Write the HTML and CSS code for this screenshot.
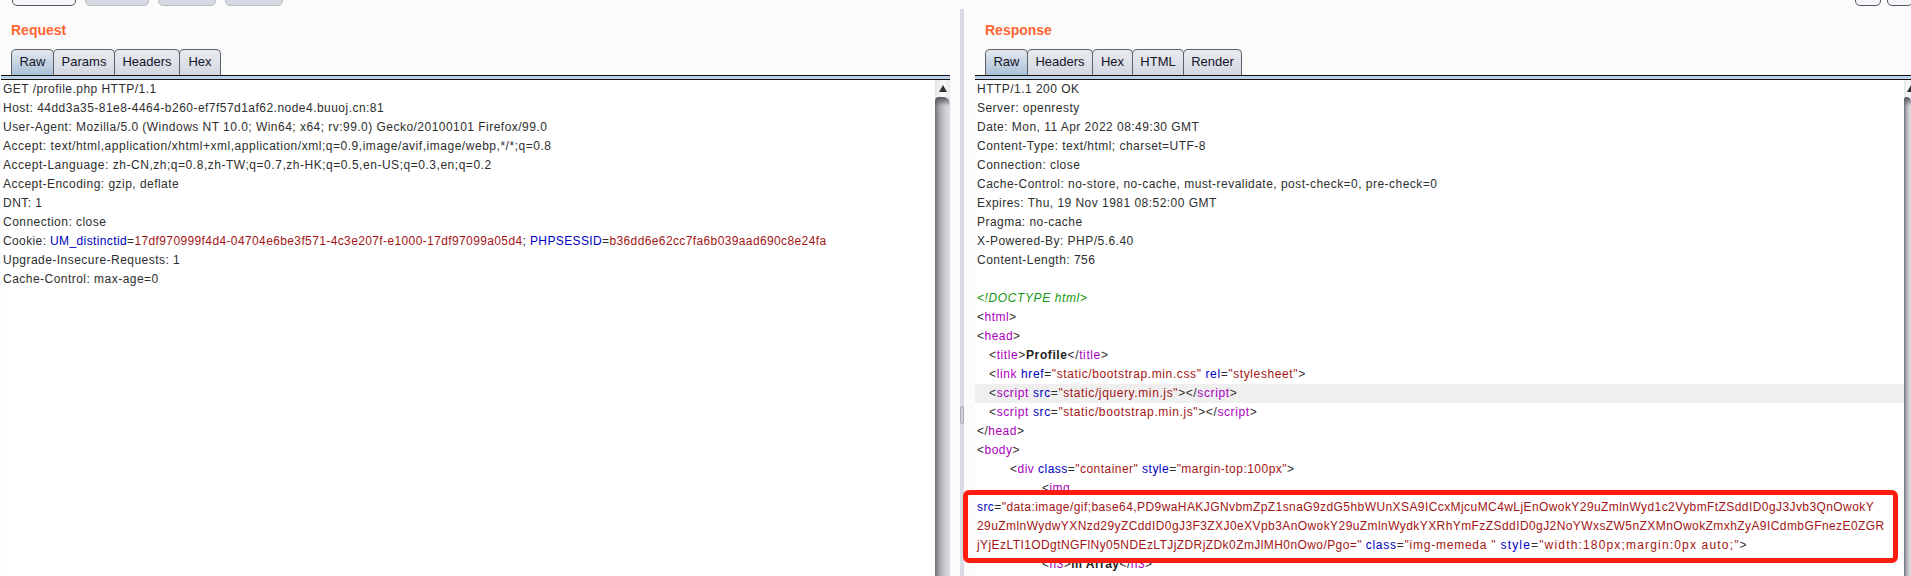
FILE: index.html
```html
<!DOCTYPE html>
<html lang="en">
<head>
<meta charset="utf-8">
<title>Repeater</title>
<link rel="stylesheet" href="styles.css">
</head>
<body>
<div class="app">
  <header class="toolbar">
    <div class="tools-left">
      <span class="tool tool-active wa"></span>
      <span class="tool wa"></span>
      <span class="tool wb"></span>
      <span class="tool wb"></span>
    </div>
    <div class="tools-right">
      <span class="tool tool-active wc"></span>
      <span class="tool tool-active wc"></span>
    </div>
  </header>
  <main class="panes">
    <section class="pane pane-left">
      <h2 class="pane-title">Request</h2>
      <nav class="tabs">
        <span class="tab tab-active t-raw">Raw</span>
        <span class="tab t-params">Params</span>
        <span class="tab t-headers">Headers</span>
        <span class="tab t-hex">Hex</span>
      </nav>
      <div class="tabline"></div>
      <div class="viewer">
        <div class="code">
          <div class="ln">GET /profile.php HTTP/1.1</div>
          <div class="ln">Host: 44dd3a35-81e8-4464-b260-ef7f57d1af62.node4.buuoj.cn:81</div>
          <div class="ln">User-Agent: Mozilla/5.0 (Windows NT 10.0; Win64; x64; rv:99.0) Gecko/20100101 Firefox/99.0</div>
          <div class="ln wide">Accept: text/html,application/xhtml+xml,application/xml;q=0.9,image/avif,image/webp,*/*;q=0.8</div>
          <div class="ln wide">Accept-Language: zh-CN,zh;q=0.8,zh-TW;q=0.7,zh-HK;q=0.5,en-US;q=0.3,en;q=0.2</div>
          <div class="ln">Accept-Encoding: gzip, deflate</div>
          <div class="ln">DNT: 1</div>
          <div class="ln">Connection: close</div>
          <div class="ln cookie">Cookie: <span class="k">UM_distinctid</span>=<span class="v">17df970999f4d4-04704e6be3f571-4c3e207f-e1000-17df97099a05d4</span>; <span class="k">PHPSESSID</span>=<span class="v">b36dd6e62cc7fa6b039aad690c8e24fa</span></div>
          <div class="ln">Upgrade-Insecure-Requests: 1</div>
          <div class="ln">Cache-Control: max-age=0</div>
        </div>
        <div class="scrollbar"><div class="arrow"><span class="tri"></span></div><div class="thumb"></div></div>
      </div>
    </section>
    <div class="splitter"><div class="stripe"><span class="grip"></span></div></div>
    <section class="pane pane-right">
      <h2 class="pane-title">Response</h2>
      <nav class="tabs">
        <span class="tab tab-active t-raw">Raw</span>
        <span class="tab t-headers">Headers</span>
        <span class="tab t-hex2">Hex</span>
        <span class="tab t-html">HTML</span>
        <span class="tab t-render">Render</span>
      </nav>
      <div class="tabline"></div>
      <div class="viewer">
        <div class="code">
          <div class="ln">HTTP/1.1 200 OK</div>
          <div class="ln">Server: openresty</div>
          <div class="ln">Date: Mon, 11 Apr 2022 08:49:30 GMT</div>
          <div class="ln">Content-Type: text/html; charset=UTF-8</div>
          <div class="ln">Connection: close</div>
          <div class="ln">Cache-Control: no-store, no-cache, must-revalidate, post-check=0, pre-check=0</div>
          <div class="ln">Expires: Thu, 19 Nov 1981 08:52:00 GMT</div>
          <div class="ln">Pragma: no-cache</div>
          <div class="ln">X-Powered-By: PHP/5.6.40</div>
          <div class="ln">Content-Length: 756</div>
          <div class="ln"></div>
          <div class="ln doctype">&lt;!DOCTYPE html&gt;</div>
          <div class="ln">&lt;<span class="t">html</span>&gt;</div>
          <div class="ln">&lt;<span class="t">head</span>&gt;</div>
          <div class="ln i1">&lt;<span class="t">title</span>&gt;<b>Profile</b>&lt;/<span class="t">title</span>&gt;</div>
          <div class="ln i1">&lt;<span class="t">link</span> <span class="k">href</span>=<span class="v">"static/bootstrap.min.css"</span> <span class="k">rel</span>=<span class="v">"stylesheet"</span>&gt;</div>
          <div class="ln i1 hl">&lt;<span class="t">script</span> <span class="k">src</span>=<span class="v">"static/jquery.min.js"</span>&gt;&lt;/<span class="t">script</span>&gt;</div>
          <div class="ln i1">&lt;<span class="t">script</span> <span class="k">src</span>=<span class="v">"static/bootstrap.min.js"</span>&gt;&lt;/<span class="t">script</span>&gt;</div>
          <div class="ln">&lt;/<span class="t">head</span>&gt;</div>
          <div class="ln">&lt;<span class="t">body</span>&gt;</div>
          <div class="ln i2">&lt;<span class="t">div</span> <span class="k">class</span>=<span class="v">"container"</span> <span class="k">style</span>=<span class="v">"margin-top:100px"</span>&gt;</div>
          <div class="ln i3">&lt;<span class="t">img</span></div>
          <div class="ln tight"><span class="k">src</span>=<span class="v">"data:image/gif;base64,PD9waHAKJGNvbmZpZ1snaG9zdG5hbWUnXSA9ICcxMjcuMC4wLjEnOwokY29uZmlnWyd1c2VybmFtZSddID0gJ3Jvb3QnOwokY</span></div>
          <div class="ln tight"><span class="v">29uZmlnWydwYXNzd29yZCddID0gJ3F3ZXJ0eXVpb3AnOwokY29uZmlnWydkYXRhYmFzZSddID0gJ2NoYWxsZW5nZXMnOwokZmxhZyA9ICdmbGFnezE0ZGR</span></div>
          <div class="ln tight"><span class="v">jYjEzLTI1ODgtNGFlNy05NDEzLTJjZDRjZDk0ZmJlMH0nOwo/Pgo="</span> <span class="mid"><span class="k">class</span>=<span class="v">"img-memeda "</span> </span><span class="spread"><span class="k">style</span>=<span class="v">"width:180px;margin:0px auto;"</span>&gt;</span></div>
          <div class="ln i3">&lt;<span class="t">h3</span>&gt;<b>m Array</b>&lt;/<span class="t">h3</span>&gt;</div>
        </div>
        <div class="scrollbar scrollbar-cut"><div class="arrow"><span class="tri"></span></div><div class="thumb"></div></div>
      </div>
    </section>
  </main>
  <div class="callout"></div>
</div>
</body>
</html>
```
FILE: styles.css
```css
* { box-sizing: border-box; }
html, body { margin: 0; padding: 0; height: 100%; overflow: hidden; background: #fbfbfb; }
.app { position: relative; width: 1911px; height: 576px; overflow: hidden; font-family: "Liberation Sans", Arial, sans-serif; font-size: 12px; color: #2e2e2e; display: flex; flex-direction: column; }

.toolbar { height: 6px; flex: none; display: flex; justify-content: space-between; align-items: flex-end; padding-left: 12px; }
.tools-left { display: flex; gap: 9px; align-items: flex-end; }
.tools-right { display: flex; gap: 6px; align-items: flex-end; margin-right: -2px; }
.tool { display: block; height: 26px; border-radius: 5px; background: #d5d9e2; border: 1px solid #b9bcc4; flex: none; }
.tool-active { background: #f4f5f7; border: 1px solid #50555e; }
.wa { width: 64px; }
.wb { width: 58px; }
.wc { width: 26px; }

.panes { flex: 1; min-height: 0; display: flex; }
.pane { display: flex; flex-direction: column; min-width: 0; }
.pane-left { width: 950px; flex: none; padding-left: 1px; }
.pane-right { flex: 1; }

.pane-title { margin: 0; height: 43px; padding: 14px 0 0 10px; font-size: 14px; line-height: 20px; font-weight: bold; color: #ff6633; }
.tabs { display: flex; height: 26px; padding-left: 10px; flex: none; }
.tab { display: block; height: 26px; border: 1px solid #5b6068; border-bottom: 0; margin-right: -1px; border-radius: 5px 5px 0 0; background: linear-gradient(#e9ebef, #d3d7e0); text-align: center; font-size: 13px; line-height: 24px; color: #14142a; flex: none; }
.tab-active { background: linear-gradient(#e3e8ee, #a9c1d6); }
.t-raw { width: 43px; }
.t-params { width: 62px; }
.t-headers { width: 66px; }
.t-hex { width: 42px; }
.t-hex2 { width: 41px; }
.t-html { width: 52px; }
.t-render { width: 59px; }
.tabline { height: 5px; flex: none; background: #bcd2e8; border-top: 1px solid #111; border-bottom: 1px solid #111; }

.viewer { flex: 1; min-height: 0; display: flex; background: #fff; overflow: hidden; }
.code { flex: 1; min-width: 0; padding-left: 2px; overflow: hidden; font-size: 12px; letter-spacing: 0.47px; }
.ln { height: 19px; line-height: 19px; white-space: pre; }
.wide { letter-spacing: 0.53px; }
.tight { letter-spacing: 0.42px; }
.cookie { letter-spacing: 0.38px; }
.mid { letter-spacing: 0.76px; }
.spread { letter-spacing: 1.17px; }
.i1 { padding-left: 12px; letter-spacing: 0.61px; }
.i2 { padding-left: 33px; }
.i3 { padding-left: 65px; }
.hl { background: #efefef; margin-left: -2px; padding-left: 14px; }
.k { color: #0000c0; }
.v { color: #a31515; }
.t { color: #aa00bb; }
.doctype { color: #149614; font-style: italic; letter-spacing: 0.6px; }
.ln b { color: #222; font-weight: bold; }

.scrollbar { width: 15px; flex: none; display: flex; flex-direction: column; background: #e4e5e9; }
.scrollbar-cut { width: 7px; }
.arrow { height: 17px; flex: none; background: linear-gradient(90deg, #e4e5e9, #fafafa 60%, #e8e9ed); display: flex; justify-content: center; align-items: center; }
.tri { display: block; width: 0; height: 0; border-left: 4px solid transparent; border-right: 4px solid transparent; border-bottom: 7px solid #333; }
.scrollbar-cut .arrow { justify-content: flex-start; padding-left: 3px; }
.thumb { flex: 1; border-radius: 4px 7px 0 0; background: linear-gradient(#55565a 0, rgba(85, 86, 90, 0) 9px), linear-gradient(90deg, #6f7075 0, #a7a8ad 30%, #cfd0d6 70%, #dcdde2 100%); }

.splitter { width: 25px; flex: none; padding: 9px 11px 0 10px; margin-top: -6px; height: 576px; }
.stripe { height: 100%; background: #d9dce4; display: flex; align-items: flex-start; }
.grip { display: block; width: 4px; height: 18px; margin-top: 397px; background: #cfd2da; border: 1px solid #a9acb4; border-radius: 2px; }

.callout { position: absolute; left: 963px; top: 490px; width: 935px; height: 73px; border: 5px solid #ff1d10; border-radius: 6px; }
```
